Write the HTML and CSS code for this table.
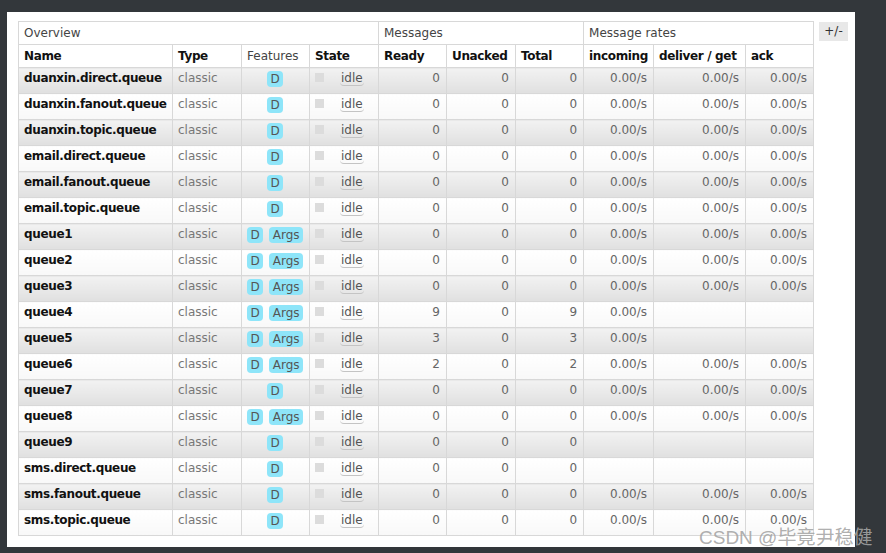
FILE: index.html
```html
<!DOCTYPE html>
<html>
<head>
<meta charset="utf-8">
<link rel="stylesheet" href="styles.css">
</head>
<body>
<div class="panel">
  <table class="list">
    <colgroup>
      <col class="c-name"><col class="c-type"><col class="c-feat"><col class="c-state">
      <col class="c-num"><col class="c-num2"><col class="c-num"><col class="c-inc"><col class="c-del"><col class="c-ack">
    </colgroup>
    <thead>
      <tr class="group">
        <th colspan="4">Overview</th>
        <th colspan="3">Messages</th>
        <th colspan="3">Message rates</th>
      </tr>
      <tr class="heads">
        <th class="b">Name</th><th class="b">Type</th><th>Features</th><th class="b">State</th>
        <th class="b">Ready</th><th class="b">Unacked</th><th class="b">Total</th>
        <th class="b">incoming</th><th class="b">deliver / get</th><th class="b">ack</th>
      </tr>
    </thead>
    <tbody>
      <tr class="alt1"><td class="name">duanxin.direct.queue</td><td class="type">classic</td><td class="feat"><span class="badge">D</span></td><td class="state"><span class="sq"></span><abbr class="idle">idle</abbr></td><td class="n">0</td><td class="n">0</td><td class="n">0</td><td class="n">0.00/s</td><td class="n">0.00/s</td><td class="n">0.00/s</td></tr>
      <tr class="alt2"><td class="name">duanxin.fanout.queue</td><td class="type">classic</td><td class="feat"><span class="badge">D</span></td><td class="state"><span class="sq"></span><abbr class="idle">idle</abbr></td><td class="n">0</td><td class="n">0</td><td class="n">0</td><td class="n">0.00/s</td><td class="n">0.00/s</td><td class="n">0.00/s</td></tr>
      <tr class="alt1"><td class="name">duanxin.topic.queue</td><td class="type">classic</td><td class="feat"><span class="badge">D</span></td><td class="state"><span class="sq"></span><abbr class="idle">idle</abbr></td><td class="n">0</td><td class="n">0</td><td class="n">0</td><td class="n">0.00/s</td><td class="n">0.00/s</td><td class="n">0.00/s</td></tr>
      <tr class="alt2"><td class="name">email.direct.queue</td><td class="type">classic</td><td class="feat"><span class="badge">D</span></td><td class="state"><span class="sq"></span><abbr class="idle">idle</abbr></td><td class="n">0</td><td class="n">0</td><td class="n">0</td><td class="n">0.00/s</td><td class="n">0.00/s</td><td class="n">0.00/s</td></tr>
      <tr class="alt1"><td class="name">email.fanout.queue</td><td class="type">classic</td><td class="feat"><span class="badge">D</span></td><td class="state"><span class="sq"></span><abbr class="idle">idle</abbr></td><td class="n">0</td><td class="n">0</td><td class="n">0</td><td class="n">0.00/s</td><td class="n">0.00/s</td><td class="n">0.00/s</td></tr>
      <tr class="alt2"><td class="name">email.topic.queue</td><td class="type">classic</td><td class="feat"><span class="badge">D</span></td><td class="state"><span class="sq"></span><abbr class="idle">idle</abbr></td><td class="n">0</td><td class="n">0</td><td class="n">0</td><td class="n">0.00/s</td><td class="n">0.00/s</td><td class="n">0.00/s</td></tr>
      <tr class="alt1"><td class="name">queue1</td><td class="type">classic</td><td class="feat"><span class="badge">D</span><span class="badge args">Args</span></td><td class="state"><span class="sq"></span><abbr class="idle">idle</abbr></td><td class="n">0</td><td class="n">0</td><td class="n">0</td><td class="n">0.00/s</td><td class="n">0.00/s</td><td class="n">0.00/s</td></tr>
      <tr class="alt2"><td class="name">queue2</td><td class="type">classic</td><td class="feat"><span class="badge">D</span><span class="badge args">Args</span></td><td class="state"><span class="sq"></span><abbr class="idle">idle</abbr></td><td class="n">0</td><td class="n">0</td><td class="n">0</td><td class="n">0.00/s</td><td class="n">0.00/s</td><td class="n">0.00/s</td></tr>
      <tr class="alt1"><td class="name">queue3</td><td class="type">classic</td><td class="feat"><span class="badge">D</span><span class="badge args">Args</span></td><td class="state"><span class="sq"></span><abbr class="idle">idle</abbr></td><td class="n">0</td><td class="n">0</td><td class="n">0</td><td class="n">0.00/s</td><td class="n">0.00/s</td><td class="n">0.00/s</td></tr>
      <tr class="alt2"><td class="name">queue4</td><td class="type">classic</td><td class="feat"><span class="badge">D</span><span class="badge args">Args</span></td><td class="state"><span class="sq"></span><abbr class="idle">idle</abbr></td><td class="n">9</td><td class="n">0</td><td class="n">9</td><td class="n">0.00/s</td><td class="n"></td><td class="n"></td></tr>
      <tr class="alt1"><td class="name">queue5</td><td class="type">classic</td><td class="feat"><span class="badge">D</span><span class="badge args">Args</span></td><td class="state"><span class="sq"></span><abbr class="idle">idle</abbr></td><td class="n">3</td><td class="n">0</td><td class="n">3</td><td class="n">0.00/s</td><td class="n"></td><td class="n"></td></tr>
      <tr class="alt2"><td class="name">queue6</td><td class="type">classic</td><td class="feat"><span class="badge">D</span><span class="badge args">Args</span></td><td class="state"><span class="sq"></span><abbr class="idle">idle</abbr></td><td class="n">2</td><td class="n">0</td><td class="n">2</td><td class="n">0.00/s</td><td class="n">0.00/s</td><td class="n">0.00/s</td></tr>
      <tr class="alt1"><td class="name">queue7</td><td class="type">classic</td><td class="feat"><span class="badge">D</span></td><td class="state"><span class="sq"></span><abbr class="idle">idle</abbr></td><td class="n">0</td><td class="n">0</td><td class="n">0</td><td class="n">0.00/s</td><td class="n">0.00/s</td><td class="n">0.00/s</td></tr>
      <tr class="alt2"><td class="name">queue8</td><td class="type">classic</td><td class="feat"><span class="badge">D</span><span class="badge args">Args</span></td><td class="state"><span class="sq"></span><abbr class="idle">idle</abbr></td><td class="n">0</td><td class="n">0</td><td class="n">0</td><td class="n">0.00/s</td><td class="n">0.00/s</td><td class="n">0.00/s</td></tr>
      <tr class="alt1"><td class="name">queue9</td><td class="type">classic</td><td class="feat"><span class="badge">D</span></td><td class="state"><span class="sq"></span><abbr class="idle">idle</abbr></td><td class="n">0</td><td class="n">0</td><td class="n">0</td><td class="n"></td><td class="n"></td><td class="n"></td></tr>
      <tr class="alt2"><td class="name">sms.direct.queue</td><td class="type">classic</td><td class="feat"><span class="badge">D</span></td><td class="state"><span class="sq"></span><abbr class="idle">idle</abbr></td><td class="n">0</td><td class="n">0</td><td class="n">0</td><td class="n"></td><td class="n"></td><td class="n"></td></tr>
      <tr class="alt1"><td class="name">sms.fanout.queue</td><td class="type">classic</td><td class="feat"><span class="badge">D</span></td><td class="state"><span class="sq"></span><abbr class="idle">idle</abbr></td><td class="n">0</td><td class="n">0</td><td class="n">0</td><td class="n">0.00/s</td><td class="n">0.00/s</td><td class="n">0.00/s</td></tr>
      <tr class="alt2"><td class="name">sms.topic.queue</td><td class="type">classic</td><td class="feat"><span class="badge">D</span></td><td class="state"><span class="sq"></span><abbr class="idle">idle</abbr></td><td class="n">0</td><td class="n">0</td><td class="n">0</td><td class="n">0.00/s</td><td class="n">0.00/s</td><td class="n">0.00/s</td></tr>
    </tbody>
  </table>
  <div class="toggle">+/-</div>
</div>
<div class="watermark">CSDN @毕竟尹稳健</div>
</body>
</html>
```
FILE: styles.css
```css
html, body {
  margin: 0;
  padding: 0;
}
body {
  background: #33373b;
  width: 886px;
  height: 553px;
  overflow: hidden;
  position: relative;
  font-family: "DejaVu Sans", Verdana, sans-serif;
  font-size: 12px;
  color: #444;
}
.panel {
  margin: 12px 0 0 7px;
  width: 848px;
  height: 535px;
  background: #fff;
  box-sizing: border-box;
  padding: 9px 0 0 11px;
  display: flex;
  align-items: flex-start;
  gap: 5px;
}
table.list {
  border-collapse: collapse;
  table-layout: fixed;
  width: 796px;
  border: 1px solid #d8d8d8;
}
.c-name { width: 154px; }
.c-type { width: 69px; }
.c-feat { width: 68px; }
.c-state { width: 69px; }
.c-num { width: 68px; }
.c-num2 { width: 69px; }
.c-inc { width: 70px; }
.c-del { width: 92px; }
.c-ack { width: 68px; }

table.list th,
table.list td {
  border: 1px solid #d8d8d8;
  padding: 0 6px 0 5px;
  vertical-align: top;
  line-height: 15px;
  white-space: nowrap;
  overflow: hidden;
}
table.list thead tr { height: 23px; }
table.list th {
  text-align: left;
  font-weight: normal;
  color: #444;
  padding-top: 4px;
  background: #fff;
}
table.list th.b {
  font-weight: bold;
  color: #111;
  letter-spacing: -0.35px;
}
table.list tbody tr { height: 26px; }
table.list td { padding-top: 3px; }
tr.alt1 td { background: linear-gradient(#f2f2f2, #e0e0e0); }
tr.alt2 td { background: linear-gradient(#ffffff, #f8f8f8); }

td.name {
  font-weight: bold;
  color: #111;
  letter-spacing: -0.35px;
}
td.type { color: #777; }
td.n {
  text-align: right;
  color: #666;
}
td.feat {
  text-align: center;
  padding: 5px 0 0 0;
}
.badge {
  display: inline-block;
  background: #8ee5f9;
  color: #555;
  border-radius: 4px;
  height: 16px;
  line-height: 16px;
  padding: 0 3.5px;
  vertical-align: top;
}
.badge.args { margin-left: 6px; }
td.state { padding-left: 6px; }
.sq {
  display: inline-block;
  width: 9px;
  height: 9px;
  background: #dcdcdc;
}
.idle {
  display: inline-block;
  margin-left: 16px;
  color: #555;
  text-decoration: none;
  border-bottom: 1px solid #c4c4c4;
  border-radius: 0 0 4px 4px;
  line-height: 14px;
  padding: 0 1px;
}
.toggle {
  margin-top: 1px;
  background: #e8e8e8;
  color: #333;
  width: 29px;
  height: 19px;
  line-height: 19px;
  text-align: center;
}
.watermark {
  position: absolute;
  left: 699px;
  top: 522px;
  font-family: "Liberation Sans", "Noto Sans CJK SC", sans-serif;
  font-size: 19px;
  color: rgba(165, 165, 165, 0.9);
  white-space: nowrap;
}
```
